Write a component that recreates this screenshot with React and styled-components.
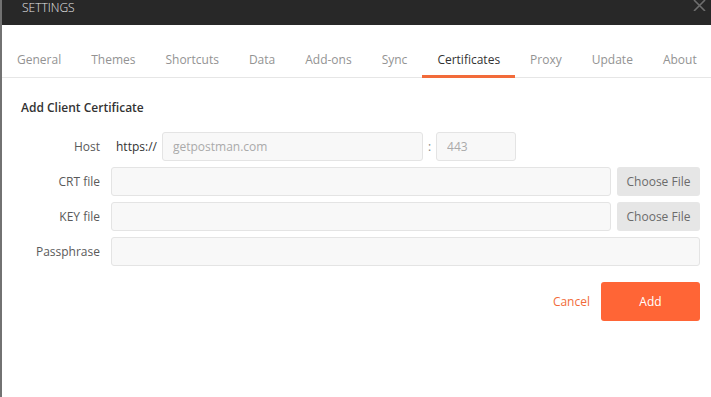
import React from 'react'
import styled, { createGlobalStyle } from 'styled-components'

const Global = createGlobalStyle`
    html, body { margin: 0; padding: 0; background: #fff; }
    body { font-family: 'Open Sans', 'Noto Sans', sans-serif; }
    * { box-sizing: border-box; }
`

const tabs = ['General','Themes','Shortcuts','Data','Add-ons','Sync','Certificates','Proxy','Update','About']

function CloseIcon() {
    return (
        <svg width="13" height="11" viewBox="0 0 13 11">
            <path d="M1 0 L12 11 M12 0 L1 11" stroke="#6e6e6e" strokeWidth="1.6" fill="none" />
        </svg>
    )
}

function App() {
    return (
        <Modal>
            <Global />
            <TitleBar>
                <Title>SETTINGS</Title>
                <CloseIcon />
            </TitleBar>
            <TabBar>
                {tabs.map(t => (
                    <Tab key={t} active={t === 'Certificates'}>{t}</Tab>
                ))}
            </TabBar>
            <Content>
                <Heading>Add Client Certificate</Heading>
                <Form>
                    <Label>Host</Label>
                    <HostRow>
                        <Prefix>https://</Prefix>
                        <Field width="261px" placeholder="getpostman.com" />
                        <Colon>:</Colon>
                        <Field width="80px" placeholder="443" />
                    </HostRow>
                    <Label>CRT file</Label>
                    <FileRow>
                        <Field />
                        <FileButton>Choose File</FileButton>
                    </FileRow>
                    <Label>KEY file</Label>
                    <FileRow>
                        <Field />
                        <FileButton>Choose File</FileButton>
                    </FileRow>
                    <Label>Passphrase</Label>
                    <Field />
                </Form>
                <Actions>
                    <CancelLink>Cancel</CancelLink>
                    <AddButton>Add</AddButton>
                </Actions>
            </Content>
        </Modal>
    )
}

const Modal = styled.div`
    width: 711px;
    height: 397px;
    border-left: 2px solid #727272;
    display: flex;
    flex-direction: column;
    overflow: hidden;
`

const TitleBar = styled.div`
    height: 25px;
    flex: none;
    background: #282828;
    display: flex;
    align-items: flex-start;
    justify-content: space-between;
    padding: 0 5px 0 20px;
`

const Title = styled.span`
    color: #e6e6e6;
    font-size: 12px;
    line-height: 15px;
    font-weight: 300;
`

const TabBar = styled.div`
    display: flex;
    flex: none;
    border-bottom: 1px solid #e6e6e6;
    padding-top: 26px;
`

const Tab = styled.div`
    flex: none;
    white-space: nowrap;
    padding: 0 15px 6px;
    line-height: 18px;
    font-size: 12px;
    color: ${p => p.active ? '#333' : '#939393'};
    border-bottom: 3px solid ${p => p.active ? '#f26b3a' : 'transparent'};
    margin-bottom: -1px;
`

const Content = styled.div`
    padding: 21px 11px 0 18px;
`

const Heading = styled.h3`
    margin: 0 0 15px 1px;
    font-size: 12px;
    line-height: 18px;
    font-weight: 600;
    color: #333;
`

const Form = styled.div`
    display: grid;
    grid-template-columns: 80px 1fr;
    column-gap: 11px;
    row-gap: 6px;
    align-items: center;
`

const Label = styled.label`
    text-align: right;
    font-size: 12px;
    color: #5a5a5a;
`

const HostRow = styled.div`
    display: flex;
    align-items: center;
    gap: 5px;
    padding-left: 5px;
    font-size: 12px;
    color: #333;
`

const Prefix = styled.span``

const Colon = styled.span`
    color: #888;
`

const Field = styled.input`
    height: 29px;
    width: ${p => p.width || '100%'};
    flex: ${p => p.width ? 'none' : '1'};
    background: #f8f8f8;
    border: 1px solid #e4e4e4;
    border-radius: 3px;
    padding: 0 10px;
    font-family: inherit;
    font-size: 12px;
    outline: none;
    &::placeholder { color: #aaa; }
`

const FileRow = styled.div`
    display: flex;
    gap: 6px;
`

const FileButton = styled.button`
    width: 83px;
    height: 29px;
    border: none;
    border-radius: 3px;
    background: #e6e6e6;
    color: #6b6b6b;
    font-family: inherit;
    font-size: 12px;
    padding: 0;
`

const Actions = styled.div`
    display: flex;
    justify-content: flex-end;
    align-items: center;
    gap: 11px;
    margin-top: 16px;
`

const CancelLink = styled.span`
    font-size: 12px;
    color: #f26b3a;
`

const AddButton = styled.button`
    width: 99px;
    height: 39px;
    border: none;
    border-radius: 3px;
    background: #ff6536;
    color: #fff;
    font-family: inherit;
    font-size: 12px;
`

export default App
